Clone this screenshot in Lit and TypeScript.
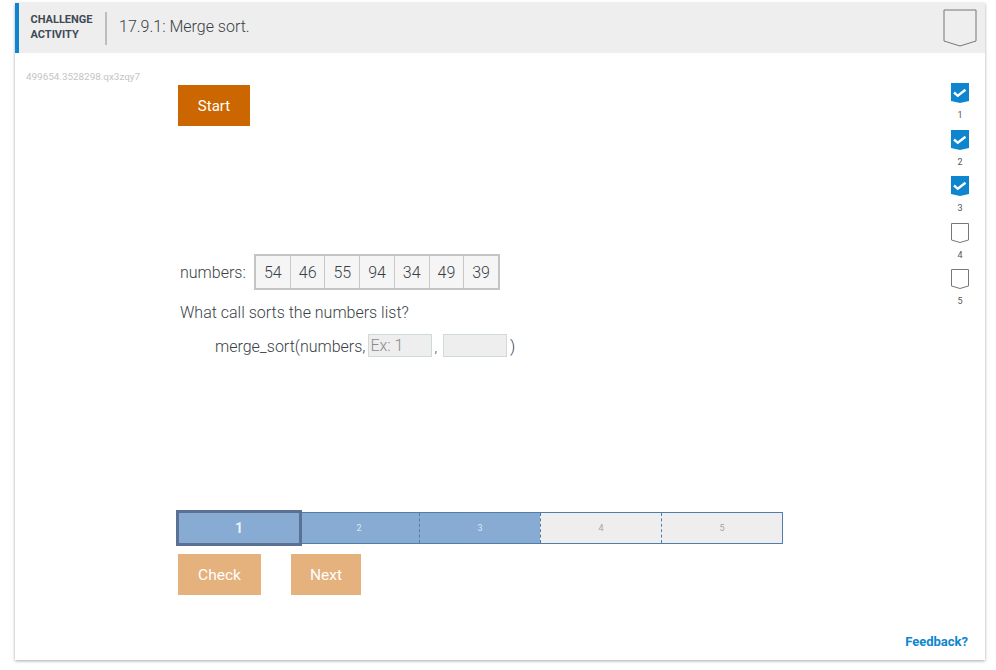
import { LitElement, html, css, svg } from "lit";
import { customElement } from "lit/decorators.js";

const NUMBERS = [54, 46, 55, 94, 34, 49, 39];
const LEVELS = [
  { n: 1, done: true },
  { n: 2, done: true },
  { n: 3, done: true },
  { n: 4, done: false },
  { n: 5, done: false },
];

@customElement("app-root")
export class AppRoot extends LitElement {
  static styles = css`
    :host {
      display: block;
      width: 996px;
      height: 670px;
      box-sizing: border-box;
      padding: 3px 11px 10px 15px;
      font-family: Roboto, "Liberation Sans", sans-serif;
      font-weight: 300;
      color: #333;
      background: #fff;
    }
    .card {
      height: 657px;
      display: flex;
      flex-direction: column;
      background: #fff;
      box-shadow: 0 1px 3px rgba(0, 0, 0, 0.35);
    }
    .head {
      height: 50px;
      flex: none;
      box-sizing: border-box;
      display: flex;
      align-items: center;
      background: #eeeeee;
      border-left: 4px solid #0d85cf;
    }
    .kind {
      width: 88px;
      box-sizing: border-box;
      padding-left: 11.5px;
      height: 33px;
      border-right: 2px solid #bdbdbd;
      font-size: 11px;
      font-weight: 700;
      line-height: 15px;
      color: #3e4a55;
    }
    .title {
      margin-left: 12px;
      font-size: 16px;
      color: #3a3f46;
      flex: 1;
      margin-top: -3px;
    }
    .big {
      width: 34px;
      height: 38px;
      margin-right: 8px;
      display: block;
    }
    .body {
      flex: 1;
      display: grid;
      grid-template-columns: 163px 1fr 57px;
      position: relative;
    }
    .id {
      font-size: 9.9px;
      font-weight: 400;
      color: #c4c4c4;
      padding: 18px 0 0 11px;
      white-space: nowrap;
    }
    .main {
      display: flex;
      flex-direction: column;
      align-items: flex-start;
      padding-top: 32px;
    }
    .btn {
      display: flex;
      align-items: center;
      justify-content: center;
      height: 41px;
      color: #fff;
      font-size: 15px;
      font-weight: 400;
      background: #cc6600;
    }
    .btn.start { width: 72px; }
    .btn.off { background: #e5b17d; font-size: 15.5px; }
    .numbers {
      display: flex;
      align-items: center;
      margin: 128px 0 0 2px;
      font-size: 16px;
      color: #3a3f46;
    }
    .array {
      display: flex;
      margin-left: 8px;
      width: 246px;
      height: 36px;
      box-sizing: border-box;
      border: 2px solid #c4c4c4;
      background: #f5f5f5;
    }
    .array span {
      flex: none;
      width: 34.7px;
      box-sizing: border-box;
      display: flex;
      align-items: center;
      justify-content: center;
      border-left: 1px solid #c8c8c8;
    }
    .array span:first-child { border-left: 0; width: 34px; }
    .array span:last-child { flex: 1; width: auto; }
    .q {
      margin: 13px 0 0 2px;
      font-size: 16px;
      line-height: 19px;
      color: #3a3f46;
    }
    .call {
      display: flex;
      align-items: flex-end;
      height: 24px;
      margin: 13px 0 0 37px;
      font-size: 16px;
      line-height: 24px;
      color: #3a3f46;
    }
    .field {
      width: 64px;
      height: 23px;
      box-sizing: border-box;
      border: 1px solid #cfdada;
      background: #eeeeee;
      color: #8a8a8a;
      font-size: 16px;
      line-height: 21px;
      padding-left: 1px;
      margin: 0 0 2px 3px;
    }
    .comma { margin: 0 3px 0 2px; font-size: 14px; }
    .paren { margin-left: 3px; }
    .progress {
      display: flex;
      width: 605px;
      height: 32px;
      margin-top: 153px;
      box-sizing: border-box;
      border: 1px solid #4f7ea8;
      background: #eeeeee;
      font-weight: 400;
    }
    .seg {
      flex: 1 1 0;
      display: flex;
      align-items: center;
      justify-content: center;
      font-size: 9px;
      color: #a5a5a5;
      border-left: 1px dashed #4f7ea8;
    }
    .seg.done { background: #87abd2; color: #dbe8f5; }
    .seg.first { border-left: 0; }
    .seg.active {
      position: relative;
      color: #e8f1f9;
      font-size: 14px;
      font-weight: 700;
    }
    .seg.active::after {
      content: "";
      position: absolute;
      inset: -3px;
      border: 3px solid #5a7193;
    }
    .actions {
      display: flex;
      gap: 30px;
      margin-top: 10px;
    }
    .check { width: 83px; }
    .next { width: 70px; }
    .side {
      display: flex;
      flex-direction: column;
      align-items: center;
      padding: 30px 0 0 7px;
    }
    .lvl {
      height: 46.5px;
      display: flex;
      flex-direction: column;
      align-items: center;
      font-size: 9px;
      font-weight: 400;
      color: #555;
    }
    .lvl svg { width: 18px; height: 20px; display: block; margin-bottom: 7px; }
    .fb {
      position: absolute;
      right: 17px;
      bottom: 11px;
      font-size: 13px;
      font-weight: 700;
      color: #0d85cf;
    }
  `;

  private mark(done: boolean) {
    return html`<svg viewBox="0 0 18 20">
      ${done
        ? svg`<path d="M0 0H18V18L9 20L0 18Z" fill="#0d85cf"/><path d="M3 9.5L6.8 12.8L14.5 6.8" fill="none" stroke="#fff" stroke-width="2.4"/>`
        : svg`<path d="M.5 .5H17.5V17L9 19.5L.5 17Z" fill="#fff" stroke="#777"/>`}
    </svg>`;
  }

  render() {
    return html`<div class="card">
      <div class="head">
        <div class="kind">CHALLENGE<br />ACTIVITY</div>
        <div class="title">17.9.1: Merge sort.</div>
        <svg class="big" viewBox="0 0 34 38">
          <path d="M1 1H33V32L17 37L1 32Z" fill="none" stroke="#777" stroke-width="1"/>
        </svg>
      </div>
      <div class="body">
        <div class="id">499654.3528298.qx3zqy7</div>
        <div class="main">
          <div class="btn start">Start</div>
          <div class="numbers">
            numbers:
            <div class="array">${NUMBERS.map((n) => html`<span>${n}</span>`)}</div>
          </div>
          <div class="q">What call sorts the numbers list?</div>
          <div class="call">
            merge_sort(numbers,<span class="field">Ex: 1</span><span class="comma">,</span><span class="field"></span><span class="paren">)</span>
          </div>
          <div class="progress">
            ${LEVELS.map(
              (l, i) =>
                html`<div class="seg ${l.done ? "done" : ""} ${i === 0 ? "active first" : ""} ${i === 1 ? "first" : ""}">${l.n}</div>`
            )}
          </div>
          <div class="actions">
            <div class="btn off check">Check</div>
            <div class="btn off next">Next</div>
          </div>
        </div>
        <div class="side">
          ${LEVELS.map((l) => html`<div class="lvl">${this.mark(l.done)}<span>${l.n}</span></div>`)}
        </div>
        <div class="fb">Feedback?</div>
      </div>
    </div>`;
  }
}
